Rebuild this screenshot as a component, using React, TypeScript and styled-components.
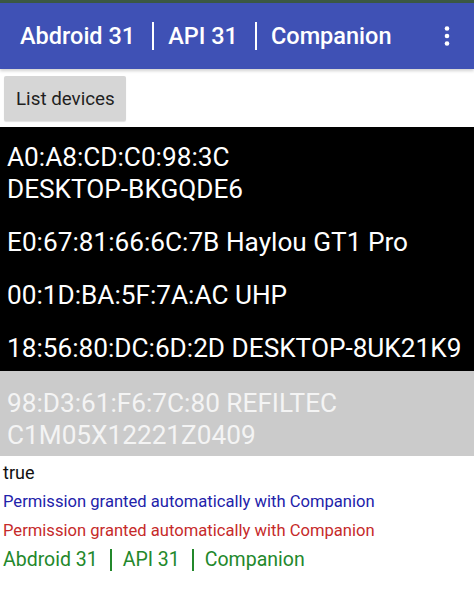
import React from 'react';
import styled, { createGlobalStyle } from 'styled-components';

const GlobalStyle = createGlobalStyle`
  body {
    margin: 0;
    background: #ffffff;
    font-family: Roboto, "Noto Sans", "Liberation Sans", sans-serif;
  }
`;

const Screen = styled.div`
  width: 474px;
  min-height: 601px;
  display: flex;
  flex-direction: column;
  background: #ffffff;
`;

const StatusStrip = styled.div`
  height: 3px;
  background: #3b5843;
`;

const AppBar = styled.header`
  height: 66px;
  display: flex;
  align-items: center;
  justify-content: space-between;
  padding: 0 15px 0 20px;
  background: #3f51b5;
  box-shadow: 0 2px 3px rgba(0, 0, 0, 0.18);
  position: relative;
  z-index: 1;
`;

interface TitleRowProps {
  size: number;
  color: string;
  weight?: number;
}

const TitleRow = styled.div<TitleRowProps>`
  display: flex;
  align-items: center;
  font-size: ${props => props.size}px;
  font-weight: ${props => props.weight || 400};
  color: ${props => props.color};
  white-space: nowrap;
`;

interface SepProps {
  color: string;
  h: number;
  w: number;
  before: number;
  after: number;
}

const Sep = styled.span<SepProps>`
  display: inline-block;
  width: ${props => props.w}px;
  height: ${props => props.h}px;
  margin: 0 ${props => props.after}px 0 ${props => props.before}px;
  background: ${props => props.color};
`;

const MenuButton = styled.div`
  width: 24px;
  height: 24px;
  display: flex;
  align-items: center;
  justify-content: center;
`;

const Toolbar = styled.div`
  padding: 7px 4px 6px;
`;

const GrayButton = styled.button`
  height: 45px;
  padding: 0 11px 0 12px;
  border: none;
  border-radius: 2px;
  background: #d6d6d6;
  box-shadow: 0 1px 1px rgba(0, 0, 0, 0.12);
  font-family: Roboto, "Liberation Sans", sans-serif;
  font-size: 18.8px;
  color: #1f1f1f;
`;

const DeviceList = styled.div`
  background: #000000;
`;

interface DeviceProps {
  selected?: boolean;
}

const DeviceItem = styled.div<DeviceProps>`
  padding: ${props => (props.selected ? '16px 7px 5px' : '14px 7px 7px')};
  background: ${props => (props.selected ? '#cbcbcb' : '#000000')};
  color: ${props => (props.selected ? '#f4f4f4' : '#ffffff')};
  font-size: 26.2px;
  line-height: 32px;
`;

const DeviceName = styled.span`
  white-space: nowrap;
`;

const Log = styled.div`
  padding: 3px 3px 0;
`;

interface LogLineProps {
  color: string;
  size: number;
  lh: number;
}

const LogLine = styled.div<LogLineProps>`
  color: ${props => props.color};
  font-size: ${props => props.size}px;
  line-height: ${props => props.lh}px;
  white-space: nowrap;
`;

const devices = [
  { mac: 'A0:A8:CD:C0:98:3C', name: 'DESKTOP-BKGQDE6' },
  { mac: 'E0:67:81:66:6C:7B', name: 'Haylou GT1 Pro' },
  { mac: '00:1D:BA:5F:7A:AC', name: 'UHP' },
  { mac: '18:56:80:DC:6D:2D', name: 'DESKTOP-8UK21K9' },
];

const labels = ['Abdroid 31', 'API 31', 'Companion'];

function Title(props: { size: number; color: string; weight?: number; sep: Omit<SepProps, 'color'> }) {
  const { size, color, weight, sep } = props;
  return (
    <TitleRow size={size} color={color} weight={weight}>
      {labels.map((l, i) => (
        <React.Fragment key={l}>
          {i > 0 && <Sep color={color} {...sep} />}
          <span>{l}</span>
        </React.Fragment>
      ))}
    </TitleRow>
  );
}

export default function App() {
  return (
    <Screen>
      <GlobalStyle />
      <StatusStrip />
      <AppBar>
        <Title size={23.5} weight={500} color="#ffffff" sep={{ w: 2, h: 28, before: 17, after: 14 }} />
        <MenuButton>
          <svg width="24" height="24" viewBox="0 0 24 24">
            <circle cx="12" cy="4.5" r="2.3" fill="#ffffff" />
            <circle cx="12" cy="12" r="2.3" fill="#ffffff" />
            <circle cx="12" cy="19.5" r="2.3" fill="#ffffff" />
          </svg>
        </MenuButton>
      </AppBar>
      <Toolbar>
        <GrayButton>List devices</GrayButton>
      </Toolbar>
      <DeviceList>
        {devices.map(d => (
          <DeviceItem key={d.mac}>
            {d.mac} <DeviceName>{d.name}</DeviceName>
          </DeviceItem>
        ))}
        <DeviceItem selected>
          98:D3:61:F6:7C:80 REFILTEC <DeviceName>C1M05X12221Z0409</DeviceName>
        </DeviceItem>
      </DeviceList>
      <Log>
        <LogLine color="#111111" size={18} lh={28}>true</LogLine>
        <LogLine color="#2222aa" size={16.6} lh={29}>Permission granted automatically with Companion</LogLine>
        <LogLine color="#c62a2a" size={16.6} lh={29}>Permission granted automatically with Companion</LogLine>
        <LogLine color="#23882b" size={19.5} lh={30}>
          <Title size={19.5} color="#23882b" sep={{ w: 2, h: 22, before: 12, after: 11 }} />
        </LogLine>
      </Log>
    </Screen>
  );
}
